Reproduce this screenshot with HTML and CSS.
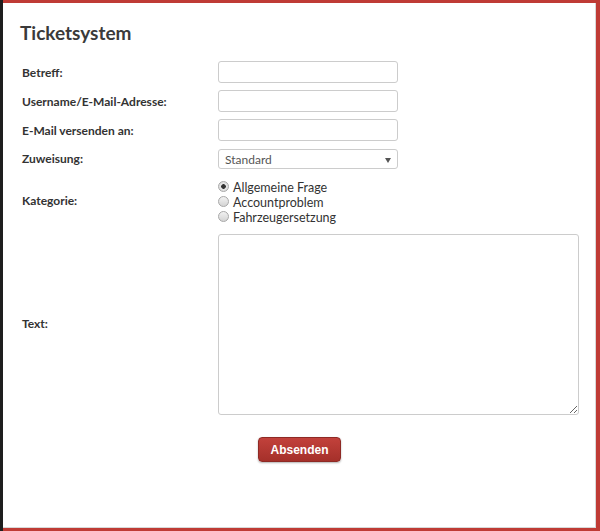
FILE: index.html
```html
<!DOCTYPE html>
<html lang="de">
<head>
    <meta charset="UTF-8">
    <title>Ticketsystem</title>
    <link rel="stylesheet" href="styles.css">
</head>
<body>
    <div class="window">
        <div class="panel">
            <h2 class="title">Ticketsystem</h2>

            <form class="ticket-form">
                <label class="row-label" for="subject">Betreff:</label>
                <div class="row-field"><input type="text" id="subject"></div>

                <label class="row-label" for="user">Username/E-Mail-Adresse:</label>
                <div class="row-field"><input type="text" id="user"></div>

                <label class="row-label" for="mailTo">E-Mail versenden an:</label>
                <div class="row-field"><input type="text" id="mailTo"></div>

                <label class="row-label" for="assign">Zuweisung:</label>
                <div class="row-field">
                    <div class="select-wrap">
                        <select id="assign">
                            <option>Standard</option>
                        </select>
                    </div>
                </div>

                <div class="row-label">Kategorie:</div>
                <div class="row-field radios">
                    <label class="radio"><input type="radio" name="cat" checked> Allgemeine Frage</label>
                    <label class="radio"><input type="radio" name="cat"> Accountproblem</label>
                    <label class="radio"><input type="radio" name="cat"> Fahrzeugersetzung</label>
                </div>

                <label class="row-label" for="text">Text:</label>
                <div class="row-field"><textarea id="text"></textarea></div>

                <div class="actions">
                    <button type="button" class="btn-submit">Absenden</button>
                </div>
            </form>
        </div>
    </div>
</body>
</html>
```

FILE: styles.css
```css
html, body {
    height: 100%;
}

body {
    margin: 0;
    background-color: #1e1e1e;
    font-family: Lato, 'Open Sans', sans-serif;
    color: #333333;
}

.window {
    box-sizing: border-box;
    height: 531px;
    margin-left: 3px;
    border-top: 3px solid #bf3b35;
    border-right: 4px solid #bf3b35;
    border-bottom: 3px solid #bf3b35;
    background-color: #ffffff;
}

.panel {
    box-sizing: border-box;
    height: 100%;
    padding: 18px 17px 0 17px;
    border-right: 1px solid #d8d8d8;
    border-bottom: 1px solid #d8d8d8;
}

.title {
    margin: 0 0 17px 0;
    font-size: 19px;
    font-weight: 700;
    color: #3a3a3a;
}

.ticket-form {
    display: grid;
    grid-template-columns: 198px 361px;
    row-gap: 7px;
    font-size: 12px;
}

.row-label {
    display: flex;
    align-items: center;
    padding-left: 2px;
    font-weight: 700;
    color: #333333;
}

.row-field input[type="text"],
.row-field select {
    box-sizing: border-box;
    width: 180px;
    height: 22px;
    border: 1px solid #cccccc;
    border-radius: 3px;
    background-color: #ffffff;
    font-family: inherit;
    font-size: 12px;
    color: #555555;
    padding: 2px 6px;
}

/* plain select with a small triangle instead of the native arrow */
.select-wrap {
    position: relative;
    width: 180px;
}

.row-field select {
    display: block;
    height: 20px;
    padding: 0 6px;
    appearance: none;
    -webkit-appearance: none;
    margin-top: 1px;
}

.select-wrap::after {
    content: "";
    position: absolute;
    right: 7px;
    top: 9px;
    border-left: 3px solid transparent;
    border-right: 3px solid transparent;
    border-top: 5px solid #555555;
    pointer-events: none;
}

.radios {
    display: flex;
    flex-direction: column;
    padding-top: 4px;
}

.radio {
    display: flex;
    align-items: center;
    height: 15px;
    font-size: 12.5px;
    color: #333333;
}

.radio input {
    appearance: none;
    -webkit-appearance: none;
    box-sizing: border-box;
    margin: 0 4px 0 0;
    width: 11px;
    height: 11px;
    border: 1px solid #a8a8a8;
    border-radius: 50%;
    background: linear-gradient(#f2f2f2, #d4d4d4);
    position: relative;
    top: -1px;
}

.radio input:checked {
    background: radial-gradient(circle, #333333 0, #333333 2px, #e6e6e6 2.6px, #d4d4d4 100%);
}

textarea {
    box-sizing: border-box;
    display: block;
    width: 361px;
    height: 181px;
    border: 1px solid #cccccc;
    border-radius: 3px;
    resize: both;
    margin-top: 2px;
}

.actions {
    grid-column: 1 / span 2;
    display: flex;
    justify-content: center;
    padding-top: 15px;
}

.btn-submit {
    width: 83px;
    height: 25px;
    border: 1px solid #8e2a25;
    border-radius: 4px;
    background: linear-gradient(#c2413b, #a5302a);
    box-shadow: 0 1px 2px rgba(0, 0, 0, 0.3);
    color: #ffffff;
    font-family: 'Liberation Sans', Arial, sans-serif;
    font-weight: 700;
    font-size: 12px;
    cursor: pointer;
}
```
